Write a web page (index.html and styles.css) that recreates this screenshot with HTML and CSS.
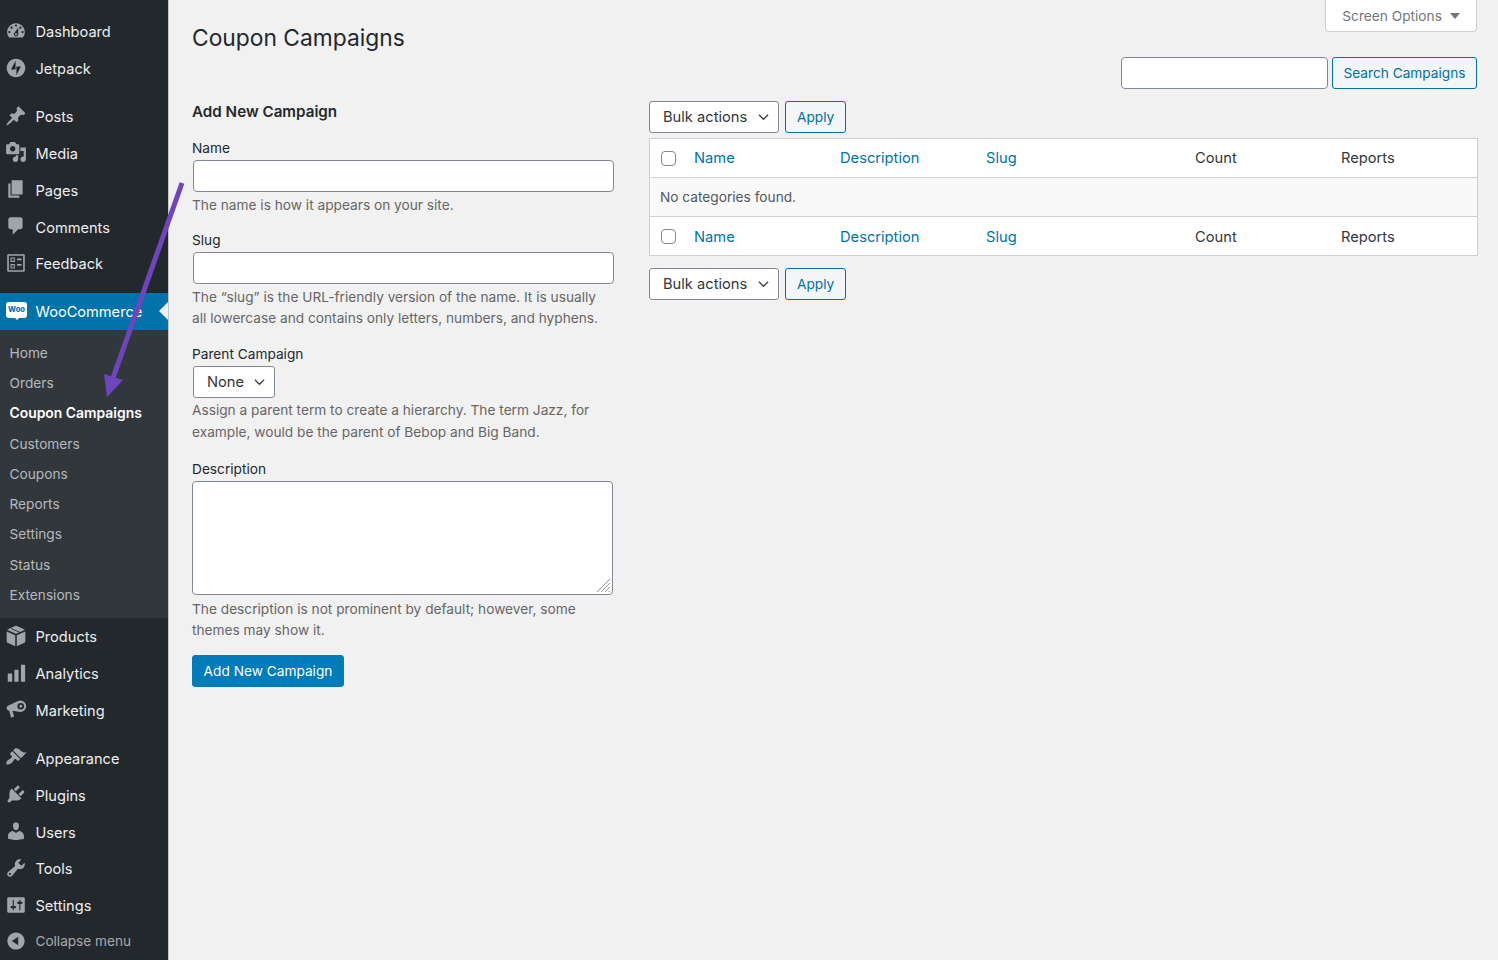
FILE: index.html
```html
<!DOCTYPE html>
<html lang="en">
<head>
    <meta charset="UTF-8">
    <title>Coupon Campaigns</title>
    <link rel="stylesheet" href="styles.css">
</head>
<body>
    <nav class="sidebar">
        <ul class="menu">
            <li class="menu-item"><svg class="menu-icon" viewBox="0 0 20 20"><path d="M3.76 16h12.48c1.1-1.37 1.76-3.11 1.76-5 0-4.42-3.58-8-8-8s-8 3.58-8 8c0 1.89.66 3.63 1.76 5zM10 4c.55 0 1 .45 1 1s-.45 1-1 1-1-.45-1-1 .45-1 1-1zM6 6c.55 0 1 .45 1 1s-.45 1-1 1-1-.45-1-1 .45-1 1-1zm8 0c.55 0 1 .45 1 1s-.45 1-1 1-1-.45-1-1 .45-1 1-1zm-5.37 5.55L12 7v6c0 1.1-.9 2-2 2s-2-.9-2-2c0-.57.24-1.08.63-1.45zM4 10c.55 0 1 .45 1 1s-.45 1-1 1-1-.45-1-1 .45-1 1-1zm12 0c.55 0 1 .45 1 1s-.45 1-1 1-1-.45-1-1 .45-1 1-1zm-5 3c0-.55-.45-1-1-1s-1 .45-1 1 .45 1 1 1 1-.45 1-1z"/></svg>Dashboard</li>
            <li class="menu-item menu-item-last"><svg class="menu-icon" viewBox="-3 -3 38 38"><path d="M16 0C7.2 0 0 7.2 0 16s7.2 16 16 16 16-7.2 16-16S24.8 0 16 0zm-.8 18.7H7.3l7.9-15.4v15.4zm1.5 10V13.3h7.9L16.7 28.7z"/></svg>Jetpack</li>

            <li class="menu-item"><svg class="menu-icon" viewBox="0 0 20 20"><path d="M10.44 3.02l1.82-1.82 6.36 6.35-1.83 1.82c-1.05-.68-2.48-.57-3.41.36l-.75.75c-.92.93-1.04 2.35-.35 3.41l-1.83 1.82-2.41-2.41-2.8 2.79c-.42.42-3.38 2.71-3.8 2.29s1.86-3.39 2.28-3.81l2.79-2.79L4.1 9.36l1.83-1.82c1.05.69 2.48.57 3.4-.36l.75-.75c.93-.92 1.05-2.35.36-3.41z"/></svg>Posts</li>
            <li class="menu-item"><svg class="menu-icon" viewBox="0 0 20 20"><path d="M13 11V4c0-.55-.45-1-1-1h-1.67L9 1H5L3.67 3H2c-.55 0-1 .45-1 1v7c0 .55.45 1 1 1h10c.55 0 1-.45 1-1zM7 4.5c1.38 0 2.5 1.12 2.5 2.5S8.38 9.5 7 9.5 4.5 8.38 4.5 7 5.62 4.5 7 4.5zM14 6h5v10.5c0 1.38-1.12 2.5-2.5 2.5S14 17.88 14 16.5s1.12-2.5 2.5-2.5c.17 0 .34.02.5.05V9h-3V6zm-4 8.05V13h2v3.5c0 1.38-1.12 2.5-2.5 2.5S7 17.88 7 16.5 8.12 14 9.5 14c.17 0 .34.02.5.05z"/></svg>Media</li>
            <li class="menu-item"><svg class="menu-icon" viewBox="0 0 20 20"><path d="M6 15V2h10v13H6zm-1 1h8v2H3V5h2v11z"/></svg>Pages</li>
            <li class="menu-item"><svg class="menu-icon" viewBox="0 0 20 20"><path d="M5 2h9c1.1 0 2 .9 2 2v7c0 1.1-.9 2-2 2h-2l-5 5v-5H5c-1.1 0-2-.9-2-2V4c0-1.1.9-2 2-2z"/></svg>Comments</li>
            <li class="menu-item menu-item-last"><svg class="menu-icon" viewBox="0 0 20 20"><path fill-rule="evenodd" d="M3 2h14a1 1 0 0 1 1 1v14a1 1 0 0 1-1 1H3a1 1 0 0 1-1-1V3a1 1 0 0 1 1-1zm.5 1.5v13h13v-13h-13zM5 5h4v4H5V5zm1 1v2h2V6H6zm5 0h4v1.5h-4V6zm-6 5h4v4H5v-4zm1 1v2h2v-2H6zm5-1h4v1.5h-4V11z"/></svg>Feedback</li>

            <li class="menu-item menu-item-current">
                <span class="woo-badge">Woo</span>WooCommerce
            </li>
            <li>
                <ul class="submenu">
                    <li class="submenu-item">Home</li>
                    <li class="submenu-item">Orders</li>
                    <li class="submenu-item submenu-item-current">Coupon Campaigns</li>
                    <li class="submenu-item">Customers</li>
                    <li class="submenu-item">Coupons</li>
                    <li class="submenu-item">Reports</li>
                    <li class="submenu-item">Settings</li>
                    <li class="submenu-item">Status</li>
                    <li class="submenu-item">Extensions</li>
                </ul>
            </li>

            <li class="menu-item"><svg class="menu-icon" viewBox="0 0 20 20"><path d="M10 .6c.3 0 .5.1.8.2l7 3.200c.2.1.2.4 0 .5L10 8 2.200 4.500c-.2-.1-.2-.4 0-.5l7-3.200c.3-.1.5-.2.8-.2zM1.500 5.800l7.800 3.500V19.300l-7-3.200c-.5-.3-.8-.7-.8-1.300zM18.500 5.800v9c0 .6-.3 1-.8 1.300l-7 3.200V9.300z"/><path d="M5.500 3.200l8 3.500" stroke="#23282d" stroke-width=".8" fill="none"/></svg>Products</li>
            <li class="menu-item"><svg class="menu-icon" viewBox="0 0 20 20"><path d="M2.500 10.500h4v7.500h-4zM8.500 7h3.800v11H8.500zM14.500 2.500h3.800V18h-3.800z"/></svg>Analytics</li>
            <li class="menu-item menu-item-last"><svg class="menu-icon" viewBox="0 0 20 20"><path fill-rule="evenodd" d="M14 2.200a5.300 5.300 0 0 1 0 10.600c-.5 0-1-.1-1.500-.3L6.800 11.700l1.500 5.300-2.800.8-1.700-6.300C2.500 11.300 1.500 10.300 1.500 9s1-2.200 2.600-2.700l7.300-3.300c.8-.5 1.700-.8 2.600-.8zm.3 2.300a3 3 0 1 0 0 6 3 3 0 0 0 0-6zm.1 1.700a1.300 1.300 0 1 1 0 2.600 1.300 1.300 0 0 1 0-2.600z"/></svg>Marketing</li>

            <li class="menu-item"><svg class="menu-icon" viewBox="0 0 20 20"><path d="M14.480 11.060L7.410 3.990l1.500-1.500c.5-.56 2.300-.47 3.510.32 1.210.8 1.430 1.280 2.910 2.100 1.180.64 2.450 1.260 4.450.85zm-.71.71L6.700 4.700 4.930 6.470c-.39.39-.39 1.020 0 1.410l1.060 1.060c.39.39.39 1.030 0 1.420-.6.6-1.430 1.110-2.210 1.690-.35.26-.7.53-1.010.84C1.430 13.230.78 15.600 1.500 16.500c.9.720 3.270.07 4.610-1.270.31-.31.58-.66.84-1.010.58-.78 1.090-1.610 1.690-2.210.39-.39 1.020-.39 1.410 0l1.060 1.060c.39.39 1.020.39 1.410 0z"/></svg>Appearance</li>
            <li class="menu-item"><svg class="menu-icon" viewBox="0 0 20 20"><path d="M13.110 4.360L9.870 7.600 8 5.730l3.240-3.240c.35-.34 1.050-.2 1.560.32.52.51.66 1.210.31 1.550zm-8 1.770l.91-1.120 9.010 9.010-1.190.84c-.71.71-2.630 1.160-3.820 1.160H6.140L4.900 17.260c-.59.59-1.540.59-2.120 0-.59-.58-.59-1.530 0-2.120l1.240-1.240v-3.880c0-1.130.4-3.190 1.090-3.890zm7.260 3.970l3.240-3.240c.34-.35 1.040-.21 1.550.31.52.51.66 1.210.31 1.550l-3.240 3.250z"/></svg>Plugins</li>
            <li class="menu-item"><svg class="menu-icon" viewBox="0 0 20 20"><path d="M10 9.250c-2.270 0-2.730-3.440-2.730-3.440C7 4.020 7.820 2 9.970 2c2.160 0 2.980 2.020 2.710 3.810 0 0-.41 3.440-2.680 3.440zm0 2.570L12.720 10c2.390 0 4.520 2.330 4.520 4.530v2.490s-3.650 1.130-7.240 1.130c-3.650 0-7.240-1.130-7.240-1.130v-2.490c0-2.250 1.940-4.480 4.470-4.480z"/></svg>Users</li>
            <li class="menu-item"><svg class="menu-icon" viewBox="0 0 20 20"><path d="M16.680 9.770c-1.340 1.340-3.300 1.670-4.950.99l-5.410 6.520c-.99.99-2.590.99-3.580 0s-.99-2.590 0-3.570l6.520-5.420c-.68-1.650-.35-3.610.99-4.950 1.280-1.280 3.120-1.620 4.720-1.060l-2.890 2.890 2.820 2.820 2.860-2.870c.53 1.580.18 3.390-1.080 4.650zM3.810 16.210c.4.39 1.040.39 1.430 0 .4-.4.4-1.040 0-1.430-.39-.4-1.030-.4-1.430 0-.39.39-.39 1.030 0 1.430z"/></svg>Tools</li>
            <li class="menu-item"><svg class="menu-icon" viewBox="0 0 20 20"><path d="M18 16V4c0-.55-.45-1-1-1H3c-.55 0-1 .45-1 1v12c0 .55.45 1 1 1h14c.55 0 1-.45 1-1zM8 11h1c.55 0 1 .45 1 1s-.45 1-1 1H8v1.500c0 .28-.22.5-.5.5s-.5-.22-.5-.5V13H6c-.55 0-1-.45-1-1s.45-1 1-1h1V5.500c0-.28.22-.5.5-.5s.5.22.5.5V11zm5-2h-1c-.55 0-1-.45-1-1s.45-1 1-1h1V5.500c0-.28.22-.5.5-.5s.5.22.5.5V7h1c.55 0 1 .45 1 1s-.45 1-1 1h-1v5.500c0 .28-.22.5-.5.5s-.5-.22-.5-.5V9z"/></svg>Settings</li>
            <li class="menu-item collapse-item"><svg class="menu-icon" viewBox="0 0 20 20"><path d="M10 2.160c4.330 0 7.840 3.510 7.840 7.840s-3.510 7.840-7.840 7.840S2.160 14.330 2.160 10 5.710 2.160 10 2.160zm2 11.720V6.120L6.180 9.970z"/></svg>Collapse menu</li>
        </ul>
    </nav>

    <main class="content">
        <button class="screen-options">Screen Options <span class="screen-options-arrow"></span></button>
        <h1 class="page-title">Coupon Campaigns</h1>

        <form class="search-box">
            <input type="text" class="text-input search-input">
            <button type="button" class="btn btn-search">Search Campaigns</button>
        </form>

        <div class="columns">
            <form class="col-left">
                <h2 class="form-title">Add New Campaign</h2>

                <div class="form-field">
                    <label class="form-label">Name</label>
                    <input type="text" class="text-input field-input">
                    <p class="help">The name is how it appears on your site.</p>
                </div>

                <div class="form-field">
                    <label class="form-label">Slug</label>
                    <input type="text" class="text-input field-input">
                    <p class="help">The “slug” is the URL-friendly version of the name. It is usually all lowercase and contains only letters, numbers, and hyphens.</p>
                </div>

                <div class="form-field form-field-parent">
                    <label class="form-label">Parent Campaign</label>
                    <select class="select select-parent"><option>None</option></select>
                    <p class="help">Assign a parent term to create a hierarchy. The term Jazz, for example, would be the parent of Bebop and Big Band.</p>
                </div>

                <div class="form-field form-field-area">
                    <label class="form-label">Description</label>
                    <textarea class="text-area"></textarea>
                    <p class="help">The description is not prominent by default; however, some themes may show it.</p>
                </div>

                <button type="button" class="btn btn-primary">Add New Campaign</button>
            </form>

            <div class="col-right">
                <div class="tablenav">
                    <select class="select select-bulk"><option>Bulk actions</option></select>
                    <button type="button" class="btn">Apply</button>
                </div>

                <table class="list-table">
                    <colgroup>
                        <col class="col-check"><col class="col-wide"><col class="col-wide"><col class="col-slug"><col class="col-wide"><col class="col-wide">
                    </colgroup>
                    <thead>
                        <tr>
                            <th class="check-cell"><input type="checkbox" class="check"></th>
                            <th><a href="#">Name</a></th>
                            <th><a href="#">Description</a></th>
                            <th><a href="#">Slug</a></th>
                            <th>Count</th>
                            <th>Reports</th>
                        </tr>
                    </thead>
                    <tbody>
                        <tr><td colspan="6" class="empty-row">No categories found.</td></tr>
                    </tbody>
                    <tfoot>
                        <tr>
                            <th class="check-cell"><input type="checkbox" class="check"></th>
                            <th><a href="#">Name</a></th>
                            <th><a href="#">Description</a></th>
                            <th><a href="#">Slug</a></th>
                            <th>Count</th>
                            <th>Reports</th>
                        </tr>
                    </tfoot>
                </table>

                <div class="tablenav tablenav-bottom">
                    <select class="select select-bulk"><option>Bulk actions</option></select>
                    <button type="button" class="btn">Apply</button>
                </div>
            </div>
        </div>
    </main>

    <svg class="annotation" viewBox="0 0 1498 960">
        <path class="annotation-line" d="M182 183L113 378"/>
        <path class="annotation-head" d="M107 397L104 374L123 380Z"/>
    </svg>
</body>
</html>
```

FILE: styles.css
```css
* {
    margin: 0;
    padding: 0;
    box-sizing: border-box;
}

body {
    font-family: Inter, 'Liberation Sans', sans-serif;
    font-size: 13.7px;
    background: #f1f1f1;
    color: #444;
    height: 960px;
    overflow: hidden;
    display: flex;
}

ul {
    list-style: none;
}

.sidebar {
    width: 169px;
    flex-shrink: 0;
    height: 960px;
    background: #23282d;
    border-right: 1px solid #c8c8c8;
    padding-top: 13px;
    color: #eee;
}

.menu-item {
    height: 36.8px;
    display: flex;
    align-items: center;
    padding-left: 5px;
    padding-top: 2px;
    font-size: 14.6px;
}

.menu-item-last {
    margin-bottom: 11.2px;
}

.menu-icon {
    width: 22px;
    height: 22px;
    margin-top: -3px;
    margin-right: 8.5px;
    fill: #a0a5aa;
    flex-shrink: 0;
}

.menu-item-current {
    background: #0073aa;
    color: #fff;
    position: relative;
}

.menu-item-current::after {
    content: "";
    position: absolute;
    right: 0;
    top: 50%;
    margin-top: -9px;
    border: 9px solid transparent;
    border-right-color: #f1f1f1;
    border-left-width: 0;
}

.woo-badge {
    width: 21px;
    height: 16px;
    margin: -5px 8.5px 0 1px;
    background: #fff;
    border-radius: 3px;
    color: #0073aa;
    font-size: 7.5px;
    font-weight: 800;
    line-height: 16px;
    text-align: center;
    position: relative;
}

.woo-badge::after {
    content: "";
    position: absolute;
    left: 9px;
    top: 16px;
    border: 2px solid transparent;
    border-top-color: #fff;
}

.submenu {
    background: #32373c;
    padding: 8px 0;
}

.submenu-item {
    height: 30.25px;
    line-height: 30.25px;
    padding-left: 9.5px;
    font-size: 13.7px;
    color: #b4b9be;
}

.submenu-item-current {
    color: #fff;
    font-weight: 600;
    font-size: 13.9px;
}

.collapse-item {
    height: 34px;
    padding-top: 0;
    color: #aaa;
    font-size: 13.6px;
}

.collapse-item .menu-icon {
    margin-top: 0;
}

.content {
    flex: 1;
    min-width: 0;
    padding-left: 23px;
    padding-right: 21px;
}

.screen-options {
    float: right;
    height: 32px;
    width: 152px;
    background: #fff;
    border: 1px solid #ccd0d4;
    border-top: none;
    border-radius: 0 0 4px 4px;
    font: inherit;
    color: #72777c;
}

.screen-options-arrow {
    display: inline-block;
    margin-left: 4px;
    vertical-align: 2px;
    border: 5px solid transparent;
    border-top: 6px solid #72777c;
    border-bottom: none;
}

.page-title {
    padding-top: 21px;
    height: 57px;
    font-size: 22.8px;
    line-height: 34px;
    font-weight: 400;
    color: #23282d;
}

.search-box {
    display: flex;
    justify-content: flex-end;
    gap: 4px;
    margin-bottom: 12px;
}

.text-input {
    height: 32px;
    background: #fff;
    border: 1px solid #7e8993;
    border-radius: 4px;
}

.search-input {
    width: 207px;
}

.btn {
    height: 32px;
    padding: 0 11px;
    background: #f3f5f6;
    border: 1px solid #0071a1;
    border-radius: 3px;
    color: #0071a1;
    font: inherit;
    white-space: nowrap;
}

.btn-search {
    width: 145px;
    padding: 0;
}

.btn-primary {
    width: 152px;
    padding: 0;
    background: #007cba;
    border-color: #007cba;
    color: #fff;
}

.columns {
    display: flex;
}

.col-left {
    width: 457px;
    flex-shrink: 0;
}

.col-right {
    flex: 1;
}

.form-title {
    font-size: 15.2px;
    line-height: 22px;
    font-weight: 600;
    color: #23282d;
    margin-bottom: 15px;
}

.form-field {
    margin-bottom: 14px;
}

.form-field-parent {
    margin-bottom: 15.5px;
}

.form-label {
    display: block;
    height: 20px;
    line-height: 20px;
    margin-bottom: 2px;
    color: #23282d;
}

.field-input {
    display: block;
    width: 421px;
    margin-left: 1px;
}

.text-area {
    display: block;
    width: 421px;
    height: 114px;
    margin-bottom: 4px;
    background: #fff url("data:image/svg+xml,%3Csvg xmlns='http://www.w3.org/2000/svg' viewBox='0 0 15 15'%3E%3Cpath d='M1 14L14 1M5 14L14 5M9 14L14 9M12.500 14L14 12.500' stroke='%23777' stroke-width='.8'/%3E%3C/svg%3E") no-repeat right 1px bottom 1px / 15px 15px;
    border: 1px solid #7e8993;
    border-radius: 4px;
    resize: none;
}

.form-field-area {
    margin-bottom: 13.5px;
}

.help {
    margin-top: 2.5px;
    line-height: 21.5px;
    color: #666;
    width: 420px;
}

.select {
    display: block;
    height: 32px;
    appearance: none;
    background: #fff url("data:image/svg+xml,%3Csvg xmlns='http://www.w3.org/2000/svg' viewBox='0 0 12 8'%3E%3Cpath d='M1 1.500l5 5 5-5' fill='none' stroke='%23444' stroke-width='1.500'/%3E%3C/svg%3E") no-repeat right 9px center / 11px 8px;
    border: 1px solid #7e8993;
    border-radius: 3px;
    color: #32373c;
    font: inherit;
    font-size: 14.7px;
    padding-left: 13px;
}

.select-parent {
    width: 82px;
    margin-left: 1px;
}

.select-bulk {
    width: 130px;
}

.tablenav {
    display: flex;
    gap: 6px;
    margin-bottom: 5px;
}

.tablenav-bottom {
    margin-top: 12px;
}

.list-table {
    width: 828px;
    table-layout: fixed;
    border-collapse: collapse;
    background: #fff;
    border: 1px solid #ccd0d4;
}

.col-check { width: 35px; }
.col-wide { width: 146px; }
.col-slug { width: 209px; }

.list-table th {
    height: 39px;
    padding-left: 9.5px;
    text-align: left;
    font-weight: 400;
    font-size: 14.7px;
    color: #32373c;
}

.list-table thead th {
    border-bottom: 1px solid #ccd0d4;
}

.list-table tfoot th {
    border-top: 1px solid #ccd0d4;
    padding-top: 2px;
}

.list-table a {
    color: #0073aa;
    text-decoration: none;
}

.list-table .check-cell {
    padding-left: 10.5px;
    padding-top: 0;
}

.check {
    display: block;
    appearance: none;
    width: 15px;
    height: 15px;
    background: #fff;
    border: 1px solid #7e8993;
    border-radius: 4px;
}

.empty-row {
    height: 39px;
    padding-left: 10px;
    background: #f9f9f9;
    color: #50575e;
}

.annotation {
    position: absolute;
    top: 0;
    left: 0;
    width: 1498px;
    height: 960px;
    pointer-events: none;
}

.annotation-line {
    fill: none;
    stroke: #6f45bd;
    stroke-width: 5;
}

.annotation-head {
    fill: #6f45bd;
}
```
